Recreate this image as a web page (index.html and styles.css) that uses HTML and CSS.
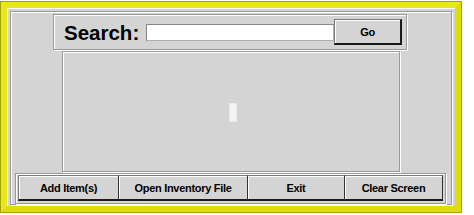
FILE: index.html
```html
<!DOCTYPE html>
<html lang="en">
<head>
    <meta charset="UTF-8">
    <title>Inventory</title>
    <link rel="stylesheet" href="styles.css">
</head>
<body>
    <div class="frame">
        <div class="window">
            <div class="content">
                <div class="searchbar">
                    <span class="label">Search:</span>
                    <input type="text" class="field">
                    <button class="go">Go</button>
                </div>
                <div class="display">
                    <div class="caret"></div>
                </div>
                <div class="buttons">
                    <button class="btn add">Add Item(s)</button>
                    <button class="btn open">Open Inventory File</button>
                    <button class="btn exit">Exit</button>
                    <button class="btn clear">Clear Screen</button>
                </div>
            </div>
        </div>
    </div>
</body>
</html>
```

FILE: styles.css
```css
* {
    box-sizing: border-box;
}

body, html {
    margin: 0;
    padding: 0;
    background: #fff;
    font-family: "Liberation Sans", Arial, sans-serif;
}

.frame {
    width: 462px;
    height: 212px;
    margin-top: 1px;
    border: 7px solid #dede00;
    border-top-color: #e8e81a;
    border-left-color: #e8e81a;
    box-shadow: inset 0 0 0 1px #8e8e50;
    outline: 1px solid #a4a400;
    outline-offset: -1px;
}

.window {
    height: 100%;
    background: #d4d4d4;
    padding: 3px;
    box-shadow: inset 1px 1px 0 #fff;
}

.content {
    width: 442px;
    height: 194px;
    border: 1px solid #9a9a9a;
    box-shadow: 1px 1px 0 #fff, inset 1px 1px 0 #fff;
    display: flex;
    flex-direction: column;
}

.searchbar {
    width: 354px;
    height: 36px;
    margin: 2px 0 0 42px;
    border: 1px solid #9a9a9a;
    box-shadow: 1px 1px 0 #fff, inset 1px 1px 0 #fff;
    display: flex;
    align-items: center;
    padding-left: 10px;
}

.label {
    font-size: 20.5px;
    font-weight: bold;
    color: #000;
    width: 82px;
    margin-top: 2px;
}

.field {
    width: 188px;
    height: 17px;
    margin: 1px 0 0 0;
    padding: 0;
    border: 1px solid #b0b0b0;
    border-top-color: #888;
    border-left-color: #888;
    background: #fff;
    outline: none;
}

.go {
    width: 68px;
    height: 26px;
    margin: 0;
    padding: 0;
    background: #d4d4d4;
    border: 1px solid #7a7a7a;
    border-right: 2px solid #1a1a1a;
    border-bottom: 2px solid #1a1a1a;
    box-shadow: inset 1px 1px 0 #fff;
    font-family: "Liberation Sans", Arial, sans-serif;
    font-size: 11px;
    font-weight: bold;
    letter-spacing: -0.3px;
    color: #000;
}

.display {
    width: 338px;
    height: 121px;
    margin: 1px 0 0 51px;
    border: 1px solid #9a9a9a;
    box-shadow: 1px 1px 0 #fff, inset 1px 1px 0 #fff;
    display: flex;
    align-items: center;
    justify-content: center;
}

.caret {
    width: 8px;
    height: 19px;
    margin: 1px 0 0 3px;
    background: #f4f4f4;
    border: 1px solid #e8e8e8;
}

.buttons {
    width: 431px;
    height: 31px;
    margin: 1px 0 0 4px;
    border: 1px solid #9a9a9a;
    box-shadow: 1px 1px 0 #fff, inset 1px 1px 0 #fff;
    display: flex;
    padding: 1px 0 0 2px;
}

.btn {
    height: 26px;
    margin: 0;
    padding: 0;
    background: #d4d4d4;
    border: none;
    border-top: 1px solid #7a7a7a;
    border-right: 1px solid #333;
    border-bottom: 2px solid #1a1a1a;
    box-shadow: inset 1px 0 0 #fff, inset 0 1px 0 #fff;
    font-family: "Liberation Sans", Arial, sans-serif;
    font-size: 11px;
    font-weight: bold;
    letter-spacing: -0.3px;
    color: #000;
}

.add {
    width: 101px;
    border-left: 1px solid #7a7a7a;
}

.open {
    width: 129px;
}

.exit {
    width: 97px;
}

.clear {
    width: 98px;
}
```
